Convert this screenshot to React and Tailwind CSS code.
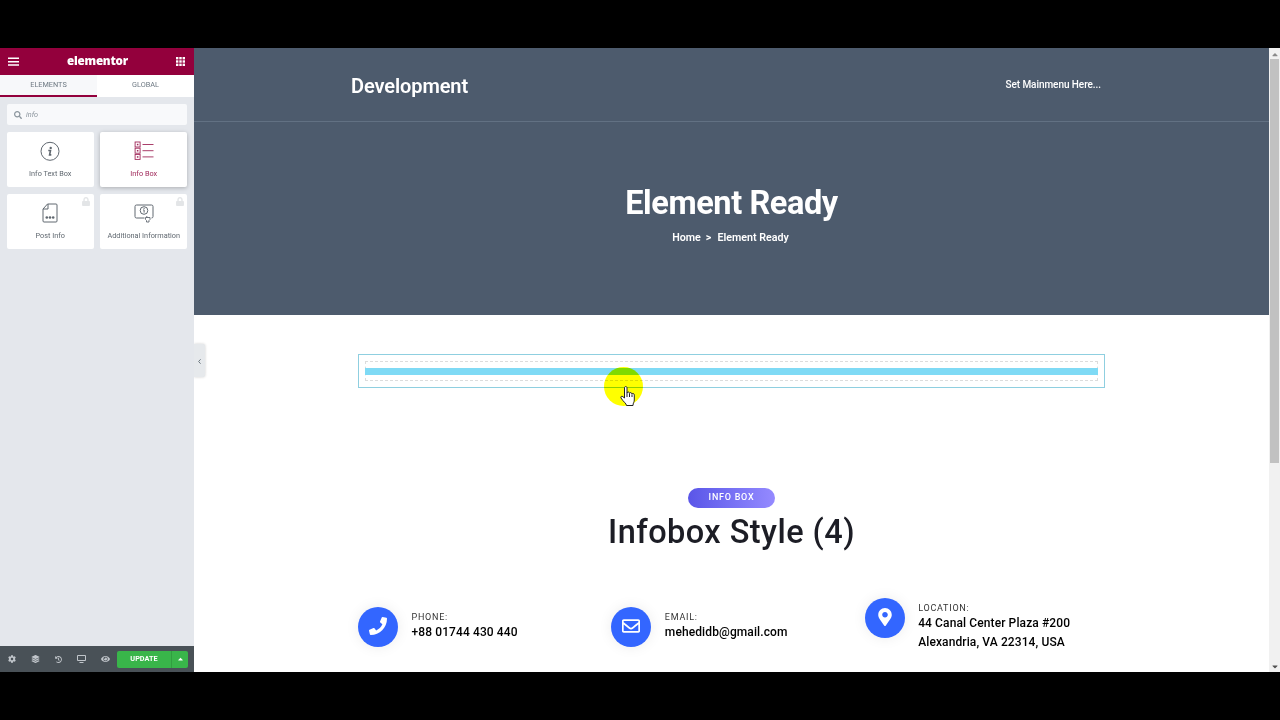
import {
  FaPhone,
  FaRegEnvelope,
  FaMapMarkerAlt,
  FaCog,
  FaLayerGroup,
  FaHistory,
  FaEye,
  FaLock,
  FaSearch,
  FaCaretUp,
  FaCaretDown,
} from "react-icons/fa";

function InfoTextIcon() {
  return (
    <svg className="w-5 h-5" viewBox="0 0 20 20" fill="none" stroke="currentColor">
      <circle cx="10" cy="10.3" r="9" />
      <circle cx="10.7" cy="6.9" r="1.2" fill="currentColor" stroke="none" />
      <path d="M8.3 9.5h2.2L9.6 13.9h1.7" strokeWidth="1.6" />
    </svg>
  );
}

function InfoBoxIcon() {
  return (
    <svg className="w-5 h-5" viewBox="0 0 20 20" fill="none" stroke="currentColor" strokeWidth="0.9">
      {[1, 7.2, 13.4].map((y) => (
        <g key={y}>
          <rect x="1.1" y={y} width="5" height="5" />
          <rect x="2.9" y={y + 1.8} width="1.5" height="1.5" fill="currentColor" stroke="none" />
          <path d={`M8.5 ${y + 2.5}H19.5`} />
        </g>
      ))}
    </svg>
  );
}

function PostInfoIcon() {
  return (
    <svg className="w-5 h-5" viewBox="0 0 20 20" fill="none" stroke="currentColor">
      <path d="M7.5 1H16a1 1 0 0 1 1 1v16a1 1 0 0 1-1 1H4a1 1 0 0 1-1-1V6zM8 1v5H3" />
      <g fill="currentColor" stroke="none">
        <circle cx="6.8" cy="14.5" r="1.3" />
        <circle cx="10" cy="14.5" r="1.3" />
        <circle cx="13.2" cy="14.5" r="1.3" />
      </g>
    </svg>
  );
}

function AdditionalInfoIcon() {
  return (
    <svg className="w-5 h-5" viewBox="0 0 20 20" fill="none" stroke="currentColor">
      <path d="M10.5 15h-8A1.5 1.5 0 0 1 1 13.500V3.500A1.500 1.500 0 0 1 2.500 2h15A1.500 1.500 0 0 1 19 3.500v10a1.500 1.500 0 0 1-1.500 1.500" />
      <circle cx="10" cy="7.500" r="3.800" />
      <path d="M9.200 6.900h.9v2.700M10.100 5v1" />
      <path d="M11.500 14.500h4.500v2l-1 1v1.500h-2.500v-1.500l-1-1zM12.800 13v1.500" strokeWidth=".9" />
    </svg>
  );
}

const widgets = [
  { label: "Info Text Box", icon: InfoTextIcon },
  { label: "Info Box", icon: InfoBoxIcon, active: true },
  { label: "Post Info", icon: PostInfoIcon, locked: true },
  { label: "Additional Information", icon: AdditionalInfoIcon, locked: true },
];

function Widget({ label, icon: Icon, active, locked }) {
  return (
    <div
      className={`relative flex h-[55px] flex-col items-center rounded-[2px] bg-white pt-[9.4px] ${
        active ? "text-[#a0295a] shadow-[0_1px_4px_rgba(0,0,0,0.25)]" : "text-[#606870]"
      }`}
    >
      <Icon />
      <span className="mt-[7.6px] text-[7.3px] leading-[10px] whitespace-nowrap">{label}</span>
      {locked && <FaLock className="absolute top-[3px] right-[3.5px] h-[9px] w-2 text-[#e3e5e7]" />}
    </div>
  );
}

function Sidebar() {
  return (
    <aside className="flex w-[194px] shrink-0 flex-col bg-[#e4e7ec]">
      <div className="flex h-[27px] items-center justify-between bg-[#93003c] pr-[9px] pl-2 text-white">
        <svg className="h-[9px] w-[11px]" viewBox="0 0 11 9" fill="currentColor">
          <path d="M0 .5h11v1.600H0zM0 3.900h11v1.600H0zM0 7.200h11v1.600H0z" />
        </svg>
        <span className="pb-[2px] font-['Open_Sans',sans-serif] text-[11.600px] leading-4 font-extrabold tracking-[-0.200px]">elementor</span>
        <svg className="h-[9px] w-[9px]" viewBox="0 0 9 9" fill="currentColor">
          {[0, 3.300, 6.600].map((y) =>
            [0, 3.300, 6.600].map((x) => <rect key={`${x}-${y}`} x={x} y={y} width="2.400" height="2.400" />)
          )}
        </svg>
      </div>

      <div className="grid h-[22px] grid-cols-2 bg-white text-center text-[7.300px] leading-5 text-[#6d7882]">
        <div className="border-b-2 border-[#93003c] bg-[#f7f8fa]">ELEMENTS</div>
        <div>GLOBAL</div>
      </div>

      <div className="mx-[7px] mt-[7px] flex h-[21px] items-center gap-1 rounded-[2px] bg-[#f8f9fb] pl-[7px] text-[#8c969e]">
        <FaSearch className="h-2 w-2" />
        <span className="pt-px text-[7.300px] italic">info</span>
      </div>

      <div className="mr-[6.6px] ml-[6.6px] mt-[7px] grid grid-cols-2 gap-x-[6.2px] gap-y-[7px]">
        {widgets.map((w) => (
          <Widget key={w.label} {...w} />
        ))}
      </div>

      <div className="mt-auto flex h-[26px] items-center bg-[#495157] pr-1.5 text-[#c0c5ca]">
        <div className="flex flex-1 items-center justify-between pr-[7px] pl-[7.5px]">
          <FaCog className="h-2 w-2" />
          <FaLayerGroup className="h-2 w-[9px]" />
          <FaHistory className="h-[7px] w-[7px]" />
          <svg className="h-2 w-[9px]" viewBox="0 0 9 8" fill="none" stroke="currentColor">
            <path d="M.5.5h8v5h-8zM2.500 7.500h4" />
          </svg>
          <FaEye className="h-2 w-[9px]" />
        </div>
        <div className="flex h-[17px] w-[71px] rounded-[2px] bg-[#39b54a] text-white">
          <div className="flex flex-1 items-center justify-center pt-px text-[7.300px] font-bold">UPDATE</div>
          <div className="flex w-[17px] items-center justify-center border-l border-[#319e40]">
            <FaCaretUp className="h-2 w-[7px]" />
          </div>
        </div>
      </div>
    </aside>
  );
}

function Hero() {
  return (
    <div className="h-[267px] bg-[#4d5b6d] text-white">
      <header className="flex h-[74px] items-center justify-between border-b border-[#627183] pr-[168px] pl-[157px]">
        <span className="pt-[2px] text-[20px] font-semibold tracking-[-0.100px]">Development</span>
        <span className="text-[10px] font-medium tracking-[-0.060px]">Set Mainmenu Here...</span>
      </header>
      <div className="flex flex-col items-center pt-[61px]">
        <h1 className="text-[32.500px] leading-10 font-bold tracking-[-0.400px]">Element Ready</h1>
        <div className="mt-[7px] mr-0.5 flex text-[10.700px] leading-4 font-semibold">
          <span>Home</span>
          <span className="mr-1.5 ml-[5px]">&gt;</span>
          <span>Element Ready</span>
        </div>
      </div>
    </div>
  );
}

const contacts = [
  { label: "PHONE:", lines: ["+88 01744 430 440"], icon: FaPhone },
  { label: "EMAIL:", lines: ["mehedidb@gmail.com"], icon: FaRegEnvelope },
  { label: "LOCATION:", lines: ["44 Canal Center Plaza #200", "Alexandria, VA 22314, USA"], icon: FaMapMarkerAlt },
];

function Contact({ label, lines, icon: Icon }) {
  return (
    <div className={`flex gap-[13.5px] ${lines.length > 1 ? "" : "pt-[9px]"}`}>
      <div className="flex h-10 w-10 items-center justify-center rounded-full bg-[#3366ff] pb-[2px] text-white shadow-[0_0_14px_rgba(0,0,0,0.080)]">
        <Icon className="h-[18px] w-[18px]" />
      </div>
      <div className="pt-1 whitespace-nowrap">
        <div className="text-[9px] leading-3 tracking-[0.750px] text-[#333]">{label}</div>
        <div className="text-[12px] leading-[19px] font-medium tracking-[0.110px] text-black">
          {lines.map((line) => (
            <div key={line}>{line}</div>
          ))}
        </div>
      </div>
    </div>
  );
}

function DropZone() {
  return (
    <div className="relative mx-auto mt-[39px] h-[34px] w-[747px] border border-[#8fcfe0] p-1.5">
      <div className="flex h-5 items-center border border-dashed border-[#dcdcdc]">
        <div className="-mx-px h-[7px] flex-1 bg-[#7fdaf5]" />
      </div>
      {/* click highlight and hand pointer */}
      <div className="absolute top-[12px] left-[245px] h-[39px] w-[39px] rounded-full bg-[#ffff00] mix-blend-multiply" />
      <svg className="absolute top-[31px] left-[261px] h-[21px] w-4" viewBox="0 0 16 21" fill="#fff" stroke="#222" strokeWidth="1">
        <path d="M4.500 12V2c0-2 2.500-2 2.500 0v5c.3-1.500 2.400-1.400 2.500.4.500-1.300 2.300-1 2.500.6.600-1 2.300-.6 2.300 1.100V14c0 2-1.300 3-1.300 5.500H6.500C6.500 17.500 3 15.500 1 12c-.8-1.500 1-2.400 2-1.200z" />
        <path d="M7 7v4M9.500 7.500V11M12 8.300V11" fill="none" />
      </svg>
    </div>
  );
}

function Preview() {
  return (
    <main className="relative min-w-0 flex-1 overflow-hidden bg-white">
      <Hero />
      <div className="absolute top-[296px] left-0 flex h-[33px] w-[11px] items-center justify-center rounded-r-[2px] bg-[#e6e9ec] pt-px pr-px text-[#6d7882] shadow-[0_0_3px_rgba(0,0,0,0.200)]">
        <svg className="h-[5px] w-[3px]" viewBox="0 0 3 5" fill="none" stroke="currentColor">
          <path d="M2.600.3.600 2.500l2 2.200" />
        </svg>
      </div>
      <DropZone />
      <div className="flex flex-col items-center pt-[100px]">
        <span className="flex h-5 w-[87px] items-center justify-center rounded-full bg-linear-to-r from-[#5a55e8] to-[#958aff] text-[9px] font-medium tracking-[0.750px] text-white">
          INFO BOX
        </span>
        <h2 className="mt-1 text-[32.500px] leading-10 font-medium tracking-[0.450px] text-[#1c1d25]">Infobox Style (4)</h2>
      </div>
      <div className="mt-[46px] ml-[164px] grid w-[760px] grid-cols-3">
        {contacts.map((c) => (
          <Contact key={c.label} {...c} />
        ))}
      </div>
    </main>
  );
}

function Scrollbar() {
  return (
    <div className="flex w-[11px] shrink-0 flex-col items-center bg-[#f1f1f1] text-[#8a8a8a]">
      <FaCaretUp className="mt-[2px] h-[9px] w-[6px]" />
      <div className="h-[404px] w-[9px] bg-[#c1c1c1]" />
      <FaCaretDown className="mt-auto mb-px h-[9px] w-[6px] text-[#505050]" />
    </div>
  );
}

export default function App() {
  return (
    <div className="h-[720px] w-[1280px] overflow-hidden bg-black py-12 font-[Roboto,sans-serif]">
      <div className="flex h-full">
        <Sidebar />
        <Preview />
        <Scrollbar />
      </div>
    </div>
  );
}
